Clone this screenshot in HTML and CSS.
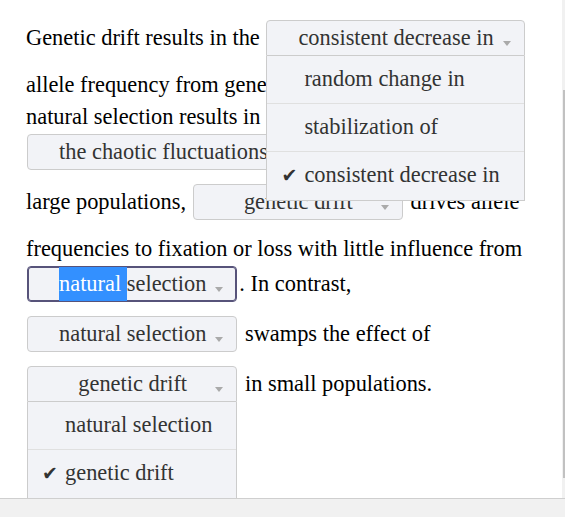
FILE: index.html
```html
<!DOCTYPE html>
<html>
<head>
    <title>Drift vs selection</title>
    <link rel="stylesheet" href="styles.css">
</head>
<body>
    <div class="window">
        <div class="viewport">
            <div class="page">
                <p class="passage">
                    Genetic drift results in the
                    <span class="dd open">
                        <span class="dd-value">
                            <span>random change in</span>
                            <span>stabilization of</span>
                            <span class="cur">consistent decrease in</span>
                        </span>
                        <span class="caret"></span>
                        <span class="dd-menu">
                            <span class="opt"><span class="check"></span>random change in</span>
                            <span class="opt"><span class="check"></span>stabilization of</span>
                            <span class="opt"><span class="check">&#10004;</span>consistent decrease in</span>
                        </span>
                    </span>
                    allele frequency from generation to generation, while
                    natural selection results in
                    <span class="dd">
                        <span class="dd-value">
                            <span class="cur">the chaotic fluctuations</span>
                            <span>a directional change</span>
                            <span>no change</span>
                        </span>
                        <span class="caret"></span>
                    </span>
                    of allele frequency in
                    large populations,
                    <span class="dd">
                        <span class="dd-value">
                            <span>natural selection</span>
                            <span class="cur">genetic drift</span>
                        </span>
                        <span class="caret"></span>
                    </span>
                    drives allele
                    frequencies to fixation or loss with little influence from
                    <span class="dd focus">
                        <span class="dd-value">
                            <span class="cur"><span class="hl">natural&nbsp;</span>selection</span>
                            <span>genetic drift</span>
                        </span>
                        <span class="caret"></span>
                    </span>. In contrast,
                    <span class="dd">
                        <span class="dd-value">
                            <span class="cur">natural selection</span>
                            <span>genetic drift</span>
                        </span>
                        <span class="caret"></span>
                    </span>
                    swamps the effect of
                    <span class="dd open">
                        <span class="dd-value">
                            <span>natural selection</span>
                            <span class="cur">genetic drift</span>
                        </span>
                        <span class="caret"></span>
                        <span class="dd-menu">
                            <span class="opt"><span class="check"></span>natural selection</span>
                            <span class="opt"><span class="check">&#10004;</span>genetic drift</span>
                        </span>
                    </span>
                    in small populations.
                </p>
            </div>
            <div class="vscroll"><div class="thumb"></div></div>
        </div>
        <div class="hbar"></div>
    </div>
</body>
</html>
```

FILE: styles.css
```css
* {
    box-sizing: border-box;
}

body {
    margin: 0;
    background: #fff;
    font-family: "Liberation Serif", "Times New Roman", serif;
}

.window {
    width: 565px;
    height: 517px;
    display: flex;
    flex-direction: column;
    overflow: hidden;
}

.viewport {
    flex: 1;
    display: flex;
    min-height: 0;
}

.page {
    flex: 1;
    overflow: hidden;
    padding: 19px 0 0 26px;
}

.passage {
    margin: 0;
    width: 509px;
    font-size: 22.4px;
    line-height: 32px;
    color: #000;
}

/* dropdowns */
.dd {
    position: relative;
    display: inline-flex;
    align-items: center;
    vertical-align: baseline;
    height: 36px;
    margin: 1px 2px 13px 1px;
    padding: 0 13px 0 31px;
    background: #f2f3f7;
    border: 1px solid #ccc;
    border-radius: 4px;
    color: #333;
    line-height: 34px;
    white-space: nowrap;
}

.dd-value {
    flex: 1;
    display: grid;
    justify-items: center;
}

.dd-value > span {
    grid-area: 1 / 1;
    visibility: hidden;
}

.dd-value > .cur {
    visibility: visible;
}

.caret {
    margin: 10px 0 0 9px;
    border-left: 4.5px solid transparent;
    border-right: 4.5px solid transparent;
    border-top: 5px solid #aaa;
}

.dd.open {
    z-index: 2;
    border-radius: 4px 4px 0 0;
}

.dd.focus {
    border-color: #57537a;
    box-shadow: inset 0 0 0 1px #57537a;
}

.hl {
    display: inline-block;
    background: #3390ff;
    color: #fff;
}

.dd-menu {
    position: absolute;
    top: calc(100% + 1px);
    left: -1px;
    right: -1px;
    display: flex;
    flex-direction: column;
    background: #f2f3f7;
    border: 1px solid #ccc;
    border-top: none;
}

.opt {
    display: flex;
    height: 48px;
    padding: 3px 0 5px 14px;
    line-height: 40px;
    border-bottom: 1px solid #e0e0e0;
}

.opt:last-child {
    border-bottom: none;
}

.check {
    width: 23px;
    font-family: "DejaVu Sans", sans-serif;
    font-size: 19px;
    color: #333;
}

/* browser chrome */
.vscroll {
    width: 3px;
    padding-top: 90px;
    background: #f1f1f1;
}

.thumb {
    width: 2px;
    height: 388px;
    margin-left: 1px;
    background: #c1c1c1;
}

.hbar {
    height: 19px;
    background: #f1f1f1;
    border-top: 1px solid #cfcfcf;
}
```
